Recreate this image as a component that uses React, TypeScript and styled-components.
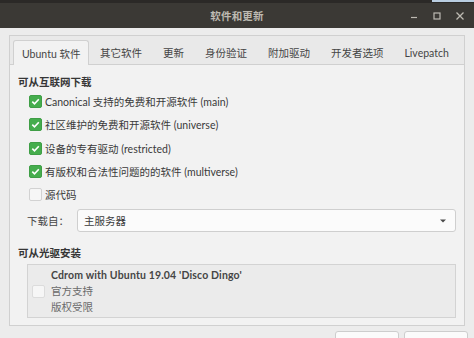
import { FC } from "react";
import styled, { createGlobalStyle } from "styled-components";

const GlobalStyle = createGlobalStyle`
  html, body {
    margin: 0;
    padding: 0;
    overflow: hidden;
    background: #ececec;
  }
  * {
    box-sizing: border-box;
  }
`;

const FONT = `Lato, "Noto Sans CJK SC", sans-serif`;

const Window = styled.div`
  width: 474px;
  height: 338px;
  display: flex;
  flex-direction: column;
  background-color: #ececec;
  font-family: ${FONT};
  font-size: 10.5px;
  color: #3a3a3a;
  overflow: hidden;
`;

const TopStrip = styled.div`
  flex: none;
  height: 3px;
  display: flex;
  justify-content: flex-end;
  background-color: #2b2927;
`;

const TopGlow = styled.div`
  width: 42px;
  height: 2px;
  background-color: #b9cde0;
`;

const TitleBar = styled.div`
  flex: none;
  position: relative;
  height: 25px;
  display: flex;
  align-items: center;
  justify-content: center;
  background-color: #3b3935;
`;

const Title = styled.span`
  font-size: 10.5px;
  font-weight: bold;
  color: #bdbab2;
  letter-spacing: 0.2px;
`;

const Controls = styled.div`
  position: absolute;
  right: 9px;
  top: 0;
  bottom: 0;
  display: flex;
  align-items: center;
  gap: 13px;
`;

const Body = styled.div`
  flex: none;
  display: flex;
  flex-direction: column;
  padding: 7px 9px 0 9px;
`;

const Notebook = styled.div`
  flex: none;
  height: 291px;
  display: flex;
  flex-direction: column;
  border: 1px solid #d0d0d0;
  background-color: #f2f2f2;
`;

const TabBar = styled.div`
  flex: none;
  height: 29px;
  display: flex;
  align-items: flex-end;
  padding-left: 3px;
  background-color: #e9e9e9;
  border-bottom: 1px solid #d0d0d0;
`;

const Tab = styled.div<{ $active?: boolean }>`
  flex: none;
  height: ${(p) => (p.$active ? "25px" : "24px")};
  margin-bottom: ${(p) => (p.$active ? "-1px" : "0")};
  display: flex;
  align-items: center;
  padding: 0 ${(p) => (p.$active ? "8px" : "9.5px")};
  white-space: nowrap;
  color: #454545;
  background-color: ${(p) => (p.$active ? "#f2f2f2" : "transparent")};
  border: 1px solid ${(p) => (p.$active ? "#d0d0d0" : "transparent")};
  border-bottom: none;
  border-radius: 3px 3px 0 0;
`;

const Page = styled.div`
  flex: 1;
  display: flex;
  flex-direction: column;
  padding: 9px 8px 0 8px;
`;

const Heading = styled.div<{ $gap?: number }>`
  flex: none;
  line-height: 16px;
  font-weight: bold;
  color: #363636;
  margin-top: ${(p) => p.$gap ?? 0}px;
`;

const Row = styled.div`
  flex: none;
  height: 23.3px;
  display: flex;
  align-items: center;
  gap: 3px;
  padding-left: 11px;
`;

const Box = styled.div<{ $checked?: boolean; $dim?: boolean }>`
  width: 13px;
  height: 13px;
  flex: none;
  display: flex;
  align-items: center;
  justify-content: center;
  border-radius: 2px;
  background-color: ${(p) => (p.$checked ? "#45ad4d" : "#f6f6f6")};
  border: 1px solid ${(p) => (p.$checked ? "#3f9e46" : p.$dim ? "#dcdcdc" : "#d2d2d2")};
`;

const Label = styled.span`
  white-space: nowrap;
`;

const SourceRow = styled.div`
  flex: none;
  margin-top: 3px;
  display: flex;
  align-items: center;
  padding-left: 9px;
`;

const SourceLabel = styled.span`
  width: 50px;
  color: #454545;
`;

const Combo = styled.div`
  flex: 1;
  height: 23px;
  display: flex;
  align-items: center;
  justify-content: space-between;
  padding: 0 8px 0 6px;
  background-color: #fbfbfb;
  border: 1px solid #cfcfcf;
  border-radius: 3px;
`;

const CdromList = styled.div`
  flex: none;
  margin: 3px 0 0 9px;
  display: flex;
  align-items: center;
  gap: 6px;
  padding: 2px 4px;
  background-color: #ebebeb;
  border: 1px solid #d3d3d3;
`;

const CdromText = styled.div`
  display: flex;
  flex-direction: column;
  line-height: 16px;
`;

const CdromTitle = styled.span`
  font-weight: bold;
  color: #454545;
  letter-spacing: 0.15px;
`;

const CdromLine = styled.span`
  color: #6a6a6a;
`;

const ButtonRow = styled.div`
  flex: none;
  margin: 5px -3px 0 0;
  display: flex;
  justify-content: flex-end;
  gap: 5px;
`;

const Button = styled.div`
  width: 64px;
  height: 26px;
  background-color: #fbfbfb;
  border: 1px solid #cdcdcd;
  border-radius: 3px;
`;

const Check: FC = () => (
  <svg width="9" height="9" viewBox="0 0 9 9">
    <path d="M1.3 4.6 L3.5 6.8 L7.8 2.2" fill="none" stroke="#fff" strokeWidth="1.6" />
  </svg>
);

const WindowControls: FC = () => (
  <Controls>
    <svg width="10" height="10" viewBox="0 0 10 10">
      <path d="M2 6.5 H8" stroke="#bdbab2" strokeWidth="1.2" />
    </svg>
    <svg width="10" height="10" viewBox="0 0 10 10">
      <rect x="2" y="2" width="6" height="6" fill="none" stroke="#bdbab2" strokeWidth="1.2" />
    </svg>
    <svg width="10" height="10" viewBox="0 0 10 10">
      <path d="M1.5 1.5 L8.5 8.5 M8.5 1.5 L1.5 8.5" stroke="#bdbab2" strokeWidth="1.3" />
    </svg>
  </Controls>
);

const tabs = ["Ubuntu 软件", "其它软件", "更新", "身份验证", "附加驱动", "开发者选项", "Livepatch"];

const sources = [
  { label: "Canonical 支持的免费和开源软件 (main)", checked: true },
  { label: "社区维护的免费和开源软件 (universe)", checked: true },
  { label: "设备的专有驱动 (restricted)", checked: true },
  { label: "有版权和合法性问题的的软件 (multiverse)", checked: true },
  { label: "源代码", checked: false },
];

const App: FC = () => (
  <>
    <GlobalStyle />
    <Window>
      <TopStrip>
        <TopGlow />
      </TopStrip>
      <TitleBar>
        <Title>软件和更新</Title>
        <WindowControls />
      </TitleBar>
      <Body>
        <Notebook>
          <TabBar>
            {tabs.map((t, i) => (
              <Tab key={t} $active={i === 0}>
                {t}
              </Tab>
            ))}
          </TabBar>
          <Page>
            <Heading>可从互联网下载</Heading>
            {sources.map((s) => (
              <Row key={s.label}>
                <Box $checked={s.checked}>{s.checked && <Check />}</Box>
                <Label>{s.label}</Label>
              </Row>
            ))}
            <SourceRow>
              <SourceLabel>下载自：</SourceLabel>
              <Combo>
                <span>主服务器</span>
                <svg width="8" height="6" viewBox="0 0 8 6">
                  <path d="M1 1.5 H7 L4 4.5 Z" fill="#4a4a4a" />
                </svg>
              </Combo>
            </SourceRow>
            <Heading $gap={13}>可从光驱安装</Heading>
            <CdromList>
              <Box $dim />
              <CdromText>
                <CdromTitle>Cdrom with Ubuntu 19.04 'Disco Dingo'</CdromTitle>
                <CdromLine>官方支持</CdromLine>
                <CdromLine>版权受限</CdromLine>
              </CdromText>
            </CdromList>
          </Page>
        </Notebook>
        <ButtonRow>
          <Button />
          <Button />
        </ButtonRow>
      </Body>
    </Window>
  </>
);

export default App;
